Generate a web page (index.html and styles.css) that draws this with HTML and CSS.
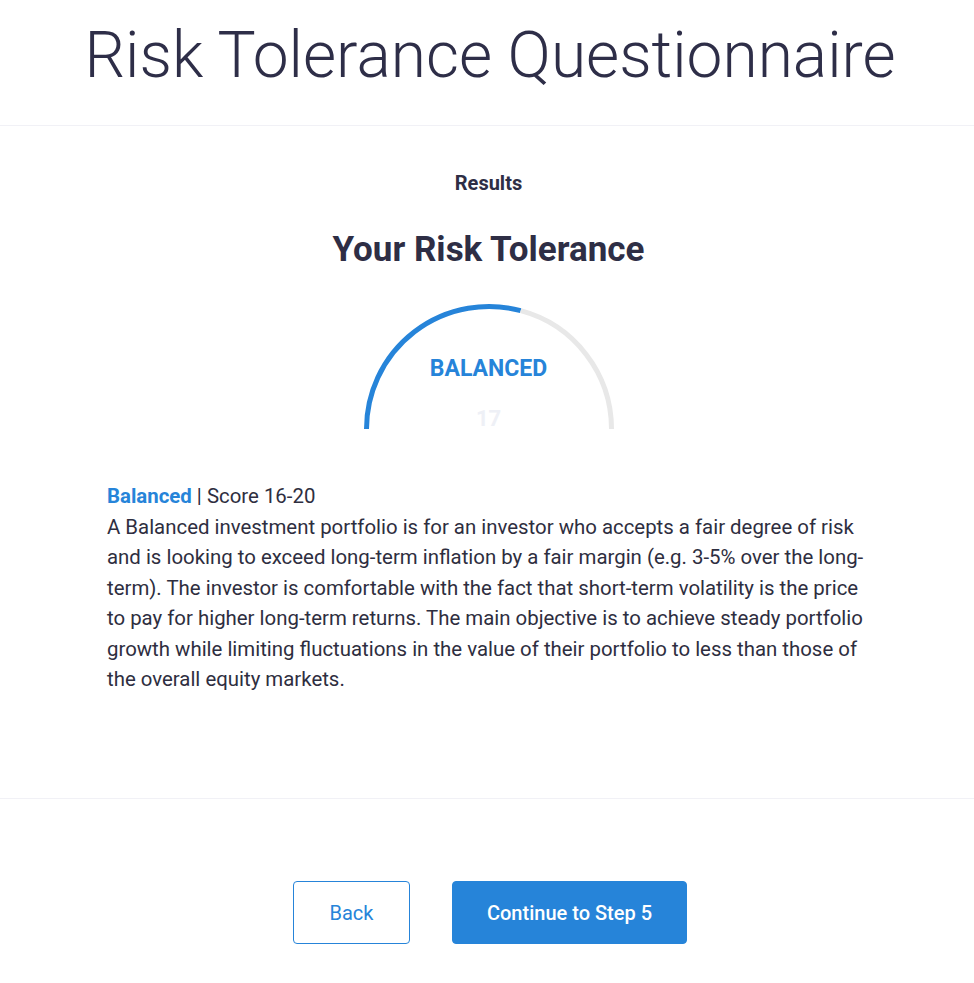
FILE: index.html
```html
<!DOCTYPE html>
<html>
<head>
<meta charset="utf-8">
<link rel="stylesheet" href="styles.css">
</head>
<body>
<header class="page-header">
  <h1 class="title">Risk Tolerance Questionnaire</h1>
</header>
<main class="results">
  <div class="results-label">Results</div>
  <h2 class="results-heading">Your Risk Tolerance</h2>
  <div class="gauge">
    <svg class="gauge-svg" width="252" height="126" viewBox="0 0 252 126">
      <path d="M 3.5 126 A 122.5 122.5 0 0 1 157.7 7.7" fill="none" stroke="#2684d9" stroke-width="5"/>
      <path d="M 157.7 7.7 A 122.5 122.5 0 0 1 248.5 126" fill="none" stroke="#e8e8e8" stroke-width="5"/>
    </svg>
    <div class="gauge-label">BALANCED</div>
    <div class="gauge-score">17</div>
  </div>
  <div class="description">
    <p class="desc-text"><span class="desc-name">Balanced</span> | Score 16-20<br>A Balanced investment portfolio is for an investor who accepts a fair degree of risk and is looking to exceed long-term inflation by a fair margin (e.g. 3-5% over the long-term). The investor is comfortable with the fact that short-term volatility is the price to pay for higher long-term returns. The main objective is to achieve steady portfolio growth while limiting fluctuations in the value of their portfolio to less than those of the overall equity markets.</p>
  </div>
</main>
<footer class="actions">
  <button class="btn btn-outline">Back</button>
  <button class="btn btn-primary">Continue to Step 5</button>
</footer>
</body>
</html>
```
FILE: styles.css
```css
html, body {
  margin: 0;
  padding: 0;
  background: #ffffff;
  font-family: Roboto, "Noto Sans", sans-serif;
  color: #2e2e45;
}
.page-header {
  padding: 24px 0 37px;
  border-bottom: 1px solid #f1f1f6;
  text-align: center;
}
.title {
  margin: 0;
  font-size: 64px;
  line-height: 64px;
  font-weight: 300;
  color: #2e2e48;
  padding-left: 6px;
}
.results {
  display: flex;
  flex-direction: column;
  align-items: center;
  padding-top: 45px;
  height: 673px;
  box-sizing: border-box;
  border-bottom: 1px solid #f1f1f6;
}
.results-label {
  font-size: 20px;
  line-height: 24px;
  font-weight: 700;
  padding-left: 3px;
}
.results-heading {
  margin: 35px 0 0;
  font-size: 35px;
  line-height: 40px;
  font-weight: 700;
  padding-left: 3px;
}
.gauge {
  position: relative;
  width: 252px;
  height: 126px;
  margin-top: 33px;
  padding-left: 3px;
}
.gauge-svg {
  display: block;
}
.gauge-label {
  position: absolute;
  left: 3px;
  right: 0;
  top: 54px;
  text-align: center;
  font-size: 23px;
  line-height: 24px;
  font-weight: 700;
  color: #2684d9;
}
.gauge-score {
  position: absolute;
  left: 3px;
  right: 0;
  top: 100px;
  height: 26px;
  overflow: hidden;
  text-align: center;
  font-size: 22px;
  line-height: 32px;
  font-weight: 700;
  color: #eef0f6;
}
.description {
  width: 762px;
  margin-top: 52px;
  padding-left: 2px;
}
.desc-text {
  margin: 0;
  font-size: 20.4px;
  line-height: 30.5px;
  color: #2e2e40;
}
.desc-name {
  color: #2684d9;
  font-weight: 700;
}
.actions {
  display: flex;
  justify-content: center;
  gap: 42px;
  padding-top: 82px;
  padding-left: 6px;
}
.btn {
  height: 63px;
  border-radius: 4px;
  font-family: Roboto, "Noto Sans", sans-serif;
  font-size: 20px;
  font-weight: 500;
  cursor: pointer;
}
.btn-outline {
  width: 117px;
  background: #ffffff;
  border: 1px solid #2684d9;
  color: #2684d9;
  font-weight: 400;
}
.btn-primary {
  width: 235px;
  background: #2684d9;
  border: 1px solid #2684d9;
  color: #ffffff;
}
```
